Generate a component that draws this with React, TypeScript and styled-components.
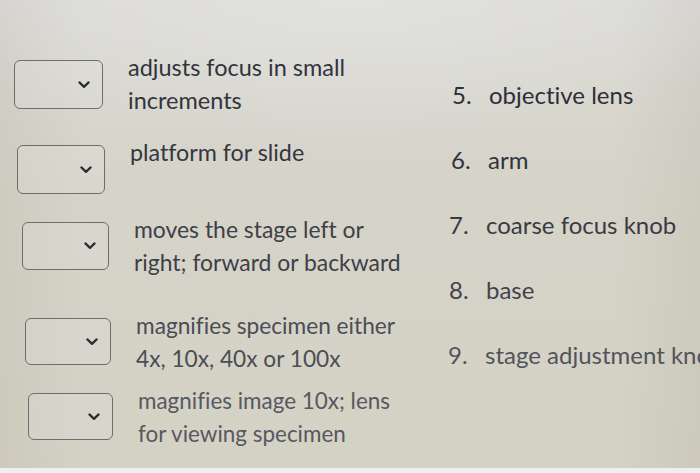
import React from "react";
import styled, { createGlobalStyle } from "styled-components";

const GlobalStyle = createGlobalStyle`
  html, body {
    margin: 0;
    padding: 0;
    background: #efefee;
  }
  body {
    font-family: Lato, "Noto Sans", sans-serif;
    font-variant-ligatures: none;
  }
`;

// rows sit a little further right and get a touch smaller going down the list
const matches = [
  { lines: ["adjusts focus in small", "increments"], shift: 0, space: 51, scale: 1, tone: "#31343c" },
  { lines: ["platform for slide"], shift: 3, space: 19, scale: 0.99, tone: "#34373f" },
  { lines: ["moves the stage left or", "right; forward or backward"], shift: 8, space: 19, scale: 0.975, tone: "#3d4048" },
  { lines: ["magnifies specimen either", "4x, 10x, 40x or 100x"], shift: 11, space: 30, scale: 0.965, tone: "#4a4d54" },
  { lines: ["magnifies image 10x; lens", "for viewing specimen"], shift: 14, space: 9, scale: 0.955, tone: "#56595f" },
];

const answers = [
  { n: 5, label: "objective lens", shift: 0, tone: "#2c2f37" },
  { n: 6, label: "arm", shift: -1, tone: "#30333b" },
  { n: 7, label: "coarse focus knob", shift: -3, tone: "#383b43" },
  { n: 8, label: "base", shift: -3, tone: "#41444b" },
  { n: 9, label: "stage adjustment knob", shift: -4, tone: "#51545b" },
];

const Chevron = () => (
  <svg width="12" height="8" viewBox="0 0 12 8" fill="none">
    <path d="M1.4 1.4 L6 5.9 L10.6 1.4" stroke="#2a2d33" strokeWidth="2.2" strokeLinecap="round" strokeLinejoin="round" />
  </svg>
);

const App = () => {
  return (
    <>
      <GlobalStyle />
      <Page>
        <Questions>
          {matches.map((m, i) => (
            <Row key={i} $shift={m.shift} $space={m.space}>
              <Select $scale={m.scale}>
                <Chevron />
              </Select>
              <Prompt $tone={m.tone} $scale={m.scale}>
                {m.lines.map((l, j) => (
                  <div key={j}>{l}</div>
                ))}
              </Prompt>
            </Row>
          ))}
        </Questions>
        <Answers>
          {answers.map((a) => (
            <Answer key={a.n} $tone={a.tone} $shift={a.shift}>
              <Num>{a.n}.</Num>
              <span>{a.label}</span>
            </Answer>
          ))}
        </Answers>
      </Page>
    </>
  );
};

export default App;

const Page = styled.div`
  position: relative;
  display: flex;
  width: 700px;
  height: 468px;
  overflow: hidden;
  background:
    radial-gradient(ellipse 60% 30% at 50% 0%, rgba(228, 228, 228, 0.7), rgba(228, 228, 228, 0) 100%),
    linear-gradient(90deg, rgba(150, 146, 130, 0.12), rgba(150, 146, 130, 0) 12%, rgba(150, 146, 130, 0) 88%, rgba(150, 146, 130, 0.12)),
    linear-gradient(180deg, #dcdbd8 0%, #d9d8d1 12%, #d6d3c8 40%, #d4d1c5 100%);
`;

const Questions = styled.div`
  display: flex;
  flex-direction: column;
  width: 449px;
  flex-shrink: 0;
  padding-left: 14px;
  box-sizing: border-box;
`;

const Row = styled.div<{ $shift: number; $space: number }>`
  display: flex;
  align-items: flex-start;
  gap: 25px;
  margin-left: ${(p) => p.$shift}px;
  margin-top: ${(p) => p.$space}px;
`;

const Select = styled.div<{ $scale: number }>`
  display: flex;
  align-items: center;
  justify-content: flex-end;
  width: ${(p) => Math.round(89 * p.$scale)}px;
  height: ${(p) => Math.round(49 * p.$scale)}px;
  margin-top: 9px;
  padding-right: 12px;
  box-sizing: border-box;
  border: 1.5px solid #6b6d70;
  border-radius: 6px;
  background: rgba(226, 225, 220, 0.3);
  flex-shrink: 0;
`;

const Prompt = styled.div<{ $tone: string; $scale: number }>`
  font-size: ${(p) => (23.5 * p.$scale).toFixed(2)}px;
  line-height: 33px;
  color: ${(p) => p.$tone};
  white-space: nowrap;
`;

const Answers = styled.ol`
  display: flex;
  flex-direction: column;
  gap: 31px;
  margin: 0;
  padding: 78px 0 0 3px;
  list-style: none;
`;

const Answer = styled.li<{ $tone: string; $shift: number }>`
  display: flex;
  margin-left: ${(p) => p.$shift}px;
  font-size: 24px;
  line-height: 34px;
  color: ${(p) => p.$tone};
  white-space: nowrap;
`;

const Num = styled.span`
  width: 37px;
  flex-shrink: 0;
`;
